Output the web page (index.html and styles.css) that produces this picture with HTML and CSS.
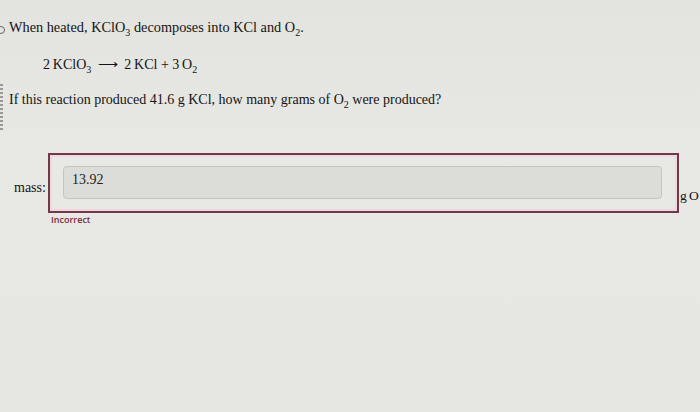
FILE: index.html
```html
<!DOCTYPE html>
<html>
<head>
<meta charset="utf-8">
<link rel="stylesheet" href="styles.css">
</head>
<body>
<div class="page">
  <div class="edge">
    <span class="dot"></span>
    <span class="strip"></span>
  </div>
  <div class="content">
    <p class="line first">When heated, KClO<sub>3</sub> decomposes into KCl and O<sub>2</sub>.</p>
    <p class="line eq">2&thinsp;KClO<sub>3</sub> <span class="arrow">⟶</span> 2&thinsp;KCl + 3&thinsp;O<sub>2</sub></p>
    <p class="line q">If this reaction produced 41.6 g KCl, how many grams of O<sub>2</sub> were produced?</p>
    <div class="answer-row">
      <span class="label">mass:</span>
      <div class="answer-col">
        <div class="answer-box">
          <div class="input">13.92</div>
        </div>
        <div class="feedback">Incorrect</div>
      </div>
      <span class="unit">g O</span>
    </div>
  </div>
</div>
</body>
</html>
```
FILE: styles.css
```css
html, body {
  margin: 0;
  padding: 0;
}
body {
  width: 700px;
  height: 412px;
  overflow: hidden;
  background: linear-gradient(180deg, #e3e3df 0%, #e8e8e4 40%, #e6e6e2 100%);
  font-family: "Liberation Serif", "Times New Roman", serif;
  color: #141414;
}
.page {
  position: relative;
  height: 412px;
}
.edge {
  position: absolute;
  left: 0;
  top: 0;
}
.dot {
  position: absolute;
  left: -3px;
  top: 26px;
  width: 6px;
  height: 6px;
  border: 1px solid #666;
  border-radius: 50%;
}
.strip {
  position: absolute;
  left: 0;
  top: 84px;
  width: 3px;
  height: 46px;
  background: repeating-linear-gradient(180deg, #999 0 2px, transparent 2px 4px);
}
.content {
  padding: 18px 0 0 9px;
}
.line {
  margin: 0;
  font-size: 14.3px;
  line-height: 18px;
}
sub {
  font-size: 10px;
  vertical-align: -4px;
  line-height: 0;
}
.eq {
  margin-top: 20px;
  padding-left: 34px;
  font-size: 14px;
}
.arrow {
  margin: 0 3px;
}
.q {
  margin-top: 17px;
  font-size: 14px;
}
.answer-row {
  display: flex;
  align-items: flex-start;
  margin-top: 44px;
}
.label {
  flex: 0 0 auto;
  font-size: 14px;
  line-height: 18px;
  width: 34px;
  padding-left: 5px;
  margin-top: 26px;
}
.answer-col {
  flex: 0 0 auto;
  display: flex;
  flex-direction: column;
}
.answer-box {
  width: 599px;
  height: 45px;
  border: 2px solid #74364a;
  box-shadow: inset 0 0 0 2px #efd9dc;
  padding: 11px 15px 0 13px;
  box-sizing: content-box;
}
.input {
  height: 31px;
  background: #dcdcd8;
  border: 1px solid #c4c4c0;
  border-radius: 4px;
  font-size: 14px;
  line-height: 26px;
  padding-left: 8px;
  color: #1e1e1e;
}
.feedback {
  margin-top: 1px;
  margin-left: 3px;
  font-family: "Open Sans", "Liberation Sans", sans-serif;
  font-weight: 600;
  font-size: 9px;
  line-height: 12px;
  color: #7a2a3c;
}
.unit {
  flex: 0 0 auto;
  margin-top: 34px;
  margin-left: 1px;
  font-size: 13.5px;
  letter-spacing: -0.6px;
  line-height: 18px;
  white-space: nowrap;
}
```
